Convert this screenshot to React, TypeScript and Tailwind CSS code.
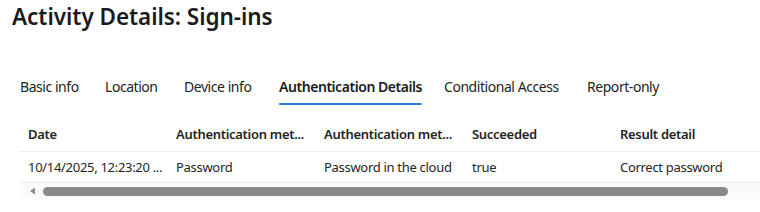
import React from "react";

const tabs: [string, string][] = [
  ["Basic info", "w-[85px]"],
  ["Location", "w-[79px]"],
  ["Device info", "w-[95px]"],
  ["Authentication Details", "w-[165px]"],
  ["Conditional Access", "w-[143px]"],
  ["Report-only", "w-[100px]"],
];
const headers = ["Date", "Authentication met...", "Authentication met...", "Succeeded", "Result detail"];
const row = ["10/14/2025, 12:23:20 ...", "Password", "Password in the cloud", "true", "Correct password"];

export default function App() {
  return (
    <div
      className="w-[760px] h-[212px] bg-white overflow-hidden text-[#242424]"
      style={{ fontFamily: '"Noto Sans", "Open Sans", sans-serif' }}
    >
      <h1 className="pl-[12px] pt-[1px] text-[22.5px] leading-[32px] font-semibold tracking-[-0.05px] text-[#1b1b1b]">
        Activity Details: Sign-ins
      </h1>
      <div className="flex pl-[20px] mt-[43px] text-[14px] tracking-[-0.45px]">
        {tabs.map(([t, w], i) => (
          <div key={t} className={w + " shrink-0"}>
            <div
              className={
                "inline-flex flex-col h-[28px] justify-between " +
                (i === 3 ? "font-semibold text-[#1b1b1b]" : "text-[#242424]")
              }
            >
              <span className="leading-[20px] whitespace-nowrap">{t}</span>
              <span className={i === 3 ? "h-[2px] bg-[#2b7cd3] rounded-sm" : "h-[2px]"} />
            </div>
          </div>
        ))}
      </div>
      <div className="ml-[20px] mt-[13px] text-[13px] tracking-[-0.3px]">
        <div className="grid grid-cols-[148px_148px_148px_148px_148px] h-[34px] items-center border-b border-[#ececec] font-semibold">
          {headers.map((h, i) => (
            <div key={i} className="pl-[8px] whitespace-nowrap overflow-hidden">{h}</div>
          ))}
        </div>
        <div className="grid grid-cols-[148px_148px_148px_148px_148px] h-[31px] pt-[2px] items-center border-b border-[#ececec]">
          {row.map((c, i) => (
            <div key={i} className="pl-[8px] whitespace-nowrap overflow-hidden">{c}</div>
          ))}
        </div>
        <div className="h-[16px] bg-[#fafafa] flex items-center">
          <svg width="14" height="16" viewBox="0 0 14 16" className="ml-[6px] shrink-0">
            <path d="M9 4.5 L4 8 L9 11.5 Z" fill="#8a8a8a" />
          </svg>
          <div className="ml-[3px] h-[9px] w-[685px] rounded-full bg-[#8a8a8a]" />
        </div>
      </div>
    </div>
  );
}
